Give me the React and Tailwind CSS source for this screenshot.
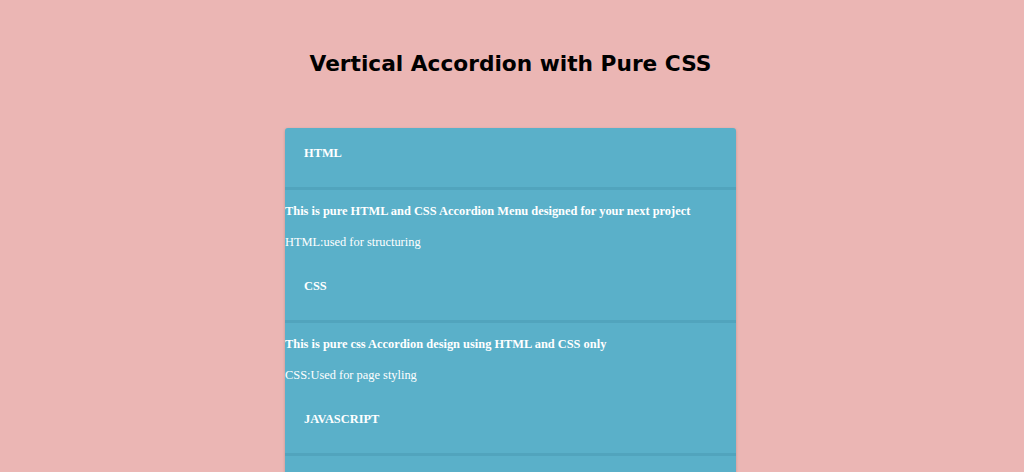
const sections = [
  {
    title: 'HTML',
    lead: 'This is pure HTML and CSS Accordion Menu designed for your next project',
    text: 'HTML:used for structuring',
  },
  {
    title: 'CSS',
    lead: 'This is pure css Accordion design using HTML and CSS only',
    text: 'CSS:Used for page styling',
  },
  {
    title: 'JAVASCRIPT',
    lead: null,
    text: null,
  },
];

export default function App() {
  return (
    <div className="min-h-screen bg-[#ebb6b4] pt-[48px] pb-10 pr-[3px]">
      <h1
        className="text-center text-[21.7px] leading-[32px] font-bold text-black mb-[48px]"
        style={{ fontFamily: '"Comic Sans MS", "DejaVu Sans", sans-serif' }}
      >
        Vertical Accordion with Pure CSS
      </h1>

      <div
        className="mx-auto w-[451px] rounded-[3px] bg-[#5ab0c9] text-white shadow-[0_1px_3px_rgba(0,0,0,0.2)] overflow-hidden"
        style={{ fontFamily: '"Liberation Serif", "Times New Roman", serif' }}
      >
        {sections.map((s) => (
          <div key={s.title}>
            <div className="h-[62px] pl-[19px] pt-[18px] border-b-[3px] border-[#51a4bd] text-[12.4px] leading-[15px] font-bold">
              {s.title}
            </div>
            <div className="text-[12.4px] leading-[15px] min-h-[71px]">
              {s.lead && <p className="pt-[14px] font-bold">{s.lead}</p>}
              {s.text && <p className="mt-[16px] mb-[11px]">{s.text}</p>}
            </div>
          </div>
        ))}
      </div>
    </div>
  );
}
